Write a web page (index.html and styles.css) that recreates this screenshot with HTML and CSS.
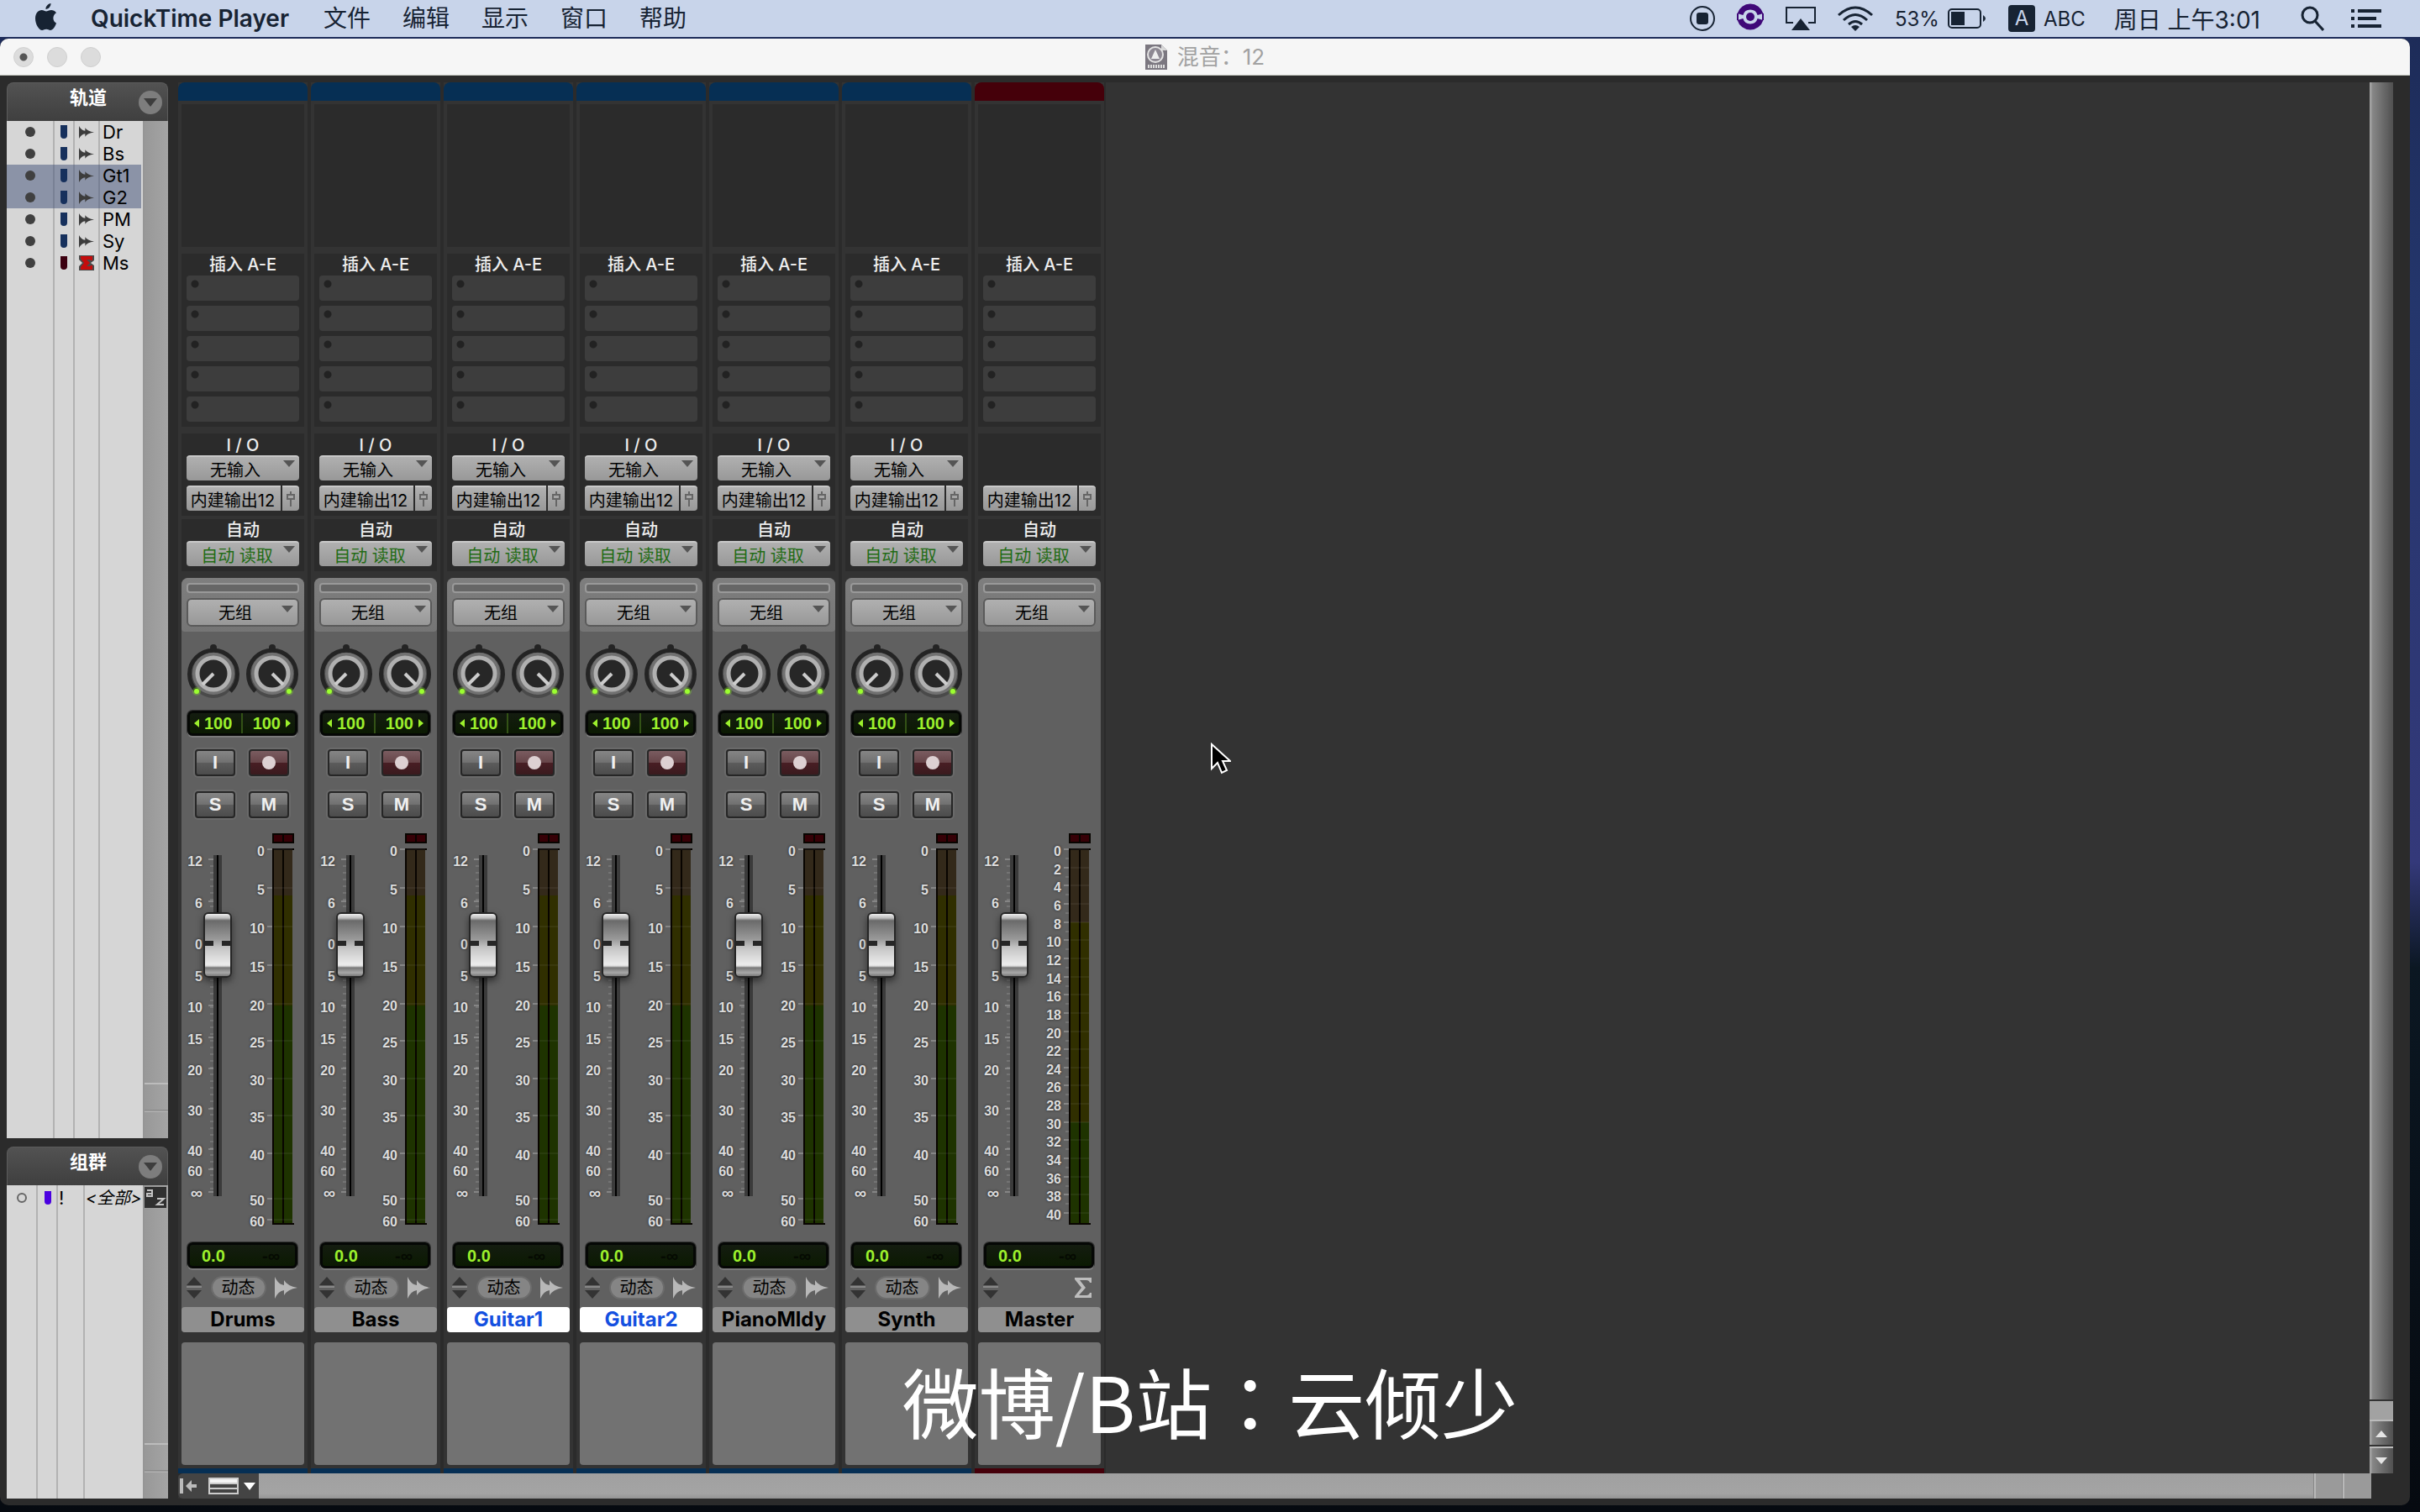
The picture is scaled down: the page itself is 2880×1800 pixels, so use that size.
FILE: index.html
```html
<!DOCTYPE html>
<html lang="zh-CN">
<head>
    <meta charset="UTF-8">
    <meta name="viewport" content="width=device-width, initial-scale=1.0">
    <title>混音：12</title>
    <link rel="stylesheet" href="styles.css">
</head>
<body>
    <header class="menubar">
        <svg class="apple" viewBox="0 0 26 32"><path d="M18.5 0c.3 3.200-2.600 7-6 7-.4-3.200 2.700-6.700 6-7zM25 23.500c-1.500 4.500-4.200 8.500-7 8.500-2 0-2.700-1.200-4.900-1.200-2.300 0-3.100 1.200-5 1.200C4.300 32 0 24.800 0 18c0-6.500 3.800-10 7.600-10 2.200 0 4 1.400 5.400 1.400 1.300 0 3.400-1.500 6.100-1.500 2 0 4.400 1.100 5.900 3.300-5.100 3-4.400 10.200 0 12.300z"/></svg>
        <nav class="menus">
            <a href="#" class="app-name">QuickTime Player</a>
            <a href="#">文件</a>
            <a href="#">编辑</a>
            <a href="#">显示</a>
            <a href="#">窗口</a>
            <a href="#">帮助</a>
        </nav>
        <div class="status">
            <svg width="30" height="30" viewBox="0 0 30 30"><circle cx="15" cy="15" r="14" fill="none" stroke="#172333" stroke-width="2"/><rect x="8" y="8" width="14" height="14" rx="3"/></svg>
            <svg class="raise" width="32" height="32" viewBox="0 0 32 32" fill="none" stroke="#3f0878"><path d="M4 13A12.500 12.500 0 0 1 28 13M4 19a12.500 12.500 0 0 0 24 0" stroke-width="7"/><path d="M1 12v8M31 12v8" stroke-width="2"/><circle cx="16" cy="16" r="5" fill="#3f0878" stroke="none"/></svg>
            <svg width="36" height="30" viewBox="0 0 36 30"><path d="M9 20H1V2h34v18h-8" fill="none" stroke="#172333" stroke-width="2"/><path d="M18 15 7 29h22z"/></svg>
            <svg width="42" height="30" viewBox="0 0 42 30"><path d="M1 11Q21-7 41 11M7 17q14-13 28 0M13 22q8-7 16 0" fill="none" stroke="#172333" stroke-width="3"/><path d="M16 25q5-4 10 0l-5 5z"/></svg>
            <div class="pair">
                <span>53%</span>
                <svg width="46" height="24" viewBox="0 0 46 24"><rect x="1" y="1" width="38" height="22" rx="4" fill="none" stroke="#172333" stroke-width="2"/><rect x="4" y="4" width="16" height="16"/><path d="M42 8q6 4 0 8z"/></svg>
            </div>
            <div class="pair">
                <b class="input-badge">A</b>
                <span>ABC</span>
            </div>
            <span class="clock">周日 上午3:01</span>
            <svg class="search" width="28" height="30" viewBox="0 0 28 30"><g fill="none" stroke="#172333" stroke-width="3"><circle cx="11" cy="11" r="9"/><path d="m17 18 10 11"/></g></svg>
            <svg width="36" height="22" viewBox="0 0 36 22"><path d="M0 0h4v4H0zM8 0h28v4H8zM0 9h4v4H0zM8 9h22v4H8zM0 18h4v4H0zM8 18h28v4H8z"/></svg>
        </div>
    </header>

    <main class="window">
        <div class="titlebar">
            <div class="lights"><i class="dirty"></i><i></i><i></i></div>
            <h1 class="doc-title">
                <svg width="26" height="30" viewBox="0 0 26 30"><path d="M0 0h19l7 7v23H0z" fill="#7b7780"/><path d="M19 0v7h7z" fill="#d8d8d8"/><circle cx="12" cy="12" r="9" fill="#8d8892" stroke="#e3e3e3" stroke-width="2"/><path d="m12 6 5 11H7z" fill="#eee"/><path d="M3 26h20" stroke="#ddd" stroke-width="4" stroke-dasharray="2 1"/></svg>
                混音：12
            </h1>
        </div>

        <div class="workspace">
            <aside class="sidebar">
                <section class="panel tracks">
                    <div class="panel-head">
                        <h2>轨道</h2>
                        <button class="drop" aria-label="轨道菜单"></button>
                    </div>
                    <div class="panel-body">
                        <ul class="list" id="trackList"></ul>
                        <div class="side-scroll"></div>
                    </div>
                </section>
                <section class="panel groups">
                    <div class="panel-head">
                        <h2>组群</h2>
                        <button class="drop" aria-label="组群菜单"></button>
                    </div>
                    <div class="panel-body">
                        <ul class="list">
                            <li class="row">
                                <i class="ring"></i>
                                <i class="color violet"></i>
                                <span>!</span>
                                <em>&lt;全部&gt;</em>
                            </li>
                        </ul>
                        <div class="side-scroll">
                            <svg class="sort" viewBox="0 0 26 25"><path d="M0 0h26v25H0z" fill="#303030"/><path d="M3 4h6v7H3V8h6M15 14h8l-8 7h8" fill="none" stroke="#c4c4c4" stroke-width="2"/></svg>
                        </div>
                    </div>
                </section>
            </aside>

            <div class="mixer">
                <div class="strips" id="strips"></div>
                <div class="vscroll">
                    <div class="vthumb"></div>
                    <button aria-label="向上"><svg viewBox="0 0 14 8"><path d="m7 0 7 8H0z"/></svg></button>
                    <button aria-label="向下"><svg viewBox="0 0 14 8"><path d="m7 8 7-8H0z"/></svg></button>
                </div>
                <div class="bottom">
                    <div class="view-tools">
                        <button aria-label="收起"><svg width="20" height="18" viewBox="0 0 20 18"><path d="M0 0h4v18H0zM7 9l7-7v5h6v4h-6v5z" fill="#bbb"/></svg></button>
                        <button aria-label="视图"><svg width="56" height="20" viewBox="0 0 56 20"><path d="M0 0h36v20H0z" fill="#ccc"/><path d="M2 2h32v4H2z" fill="#f4f4f4"/><path d="M2 8h32v4H2zM2 14h32v4H2z" fill="#444"/><path d="M42 6h14l-7 9z" fill="#fff"/></svg></button>
                    </div>
                    <div class="hscroll"><i></i><i></i></div>
                </div>
            </div>
        </div>
    </main>

    <p class="watermark">微博/B站<span lang="zh-TW">：</span>云倾少</p>
    <svg class="cursor" viewBox="0 0 24 38"><path d="M1 2v29l7-7 5 12 6-3-5-11h9z" fill="#000" stroke="#fff" stroke-width="2"/></svg>

    <script src="script.js"></script>
</body>
</html>
```
FILE: styles.css
```css
* {
    box-sizing: border-box;
}
body {
    margin: 0;
    height: 100vh;
    display: flex;
    flex-direction: column;
    overflow: hidden;
    background: linear-gradient(#1c2a56 0, #24366c 20%, #34397a 57%, #0b1722 64%, #060a10 100%);
    font-family: Inter, "Noto Sans CJK SC", sans-serif;
    font-size: 20px;
    color: #000;
}
button, select, input {
    font: inherit;
    margin: 0;
    padding: 0;
    border: none;
    border-radius: 0;
    appearance: none;
}
h1, h2, h3, ul, p {
    margin: 0;
    padding: 0;
    font-weight: normal;
}
svg {
    display: block;
    flex: none;
}

/* menu bar */
.menubar {
    height: 44px;
    flex: none;
    display: flex;
    align-items: center;
    padding: 0 46px 0 42px;
    background: #c8d4ea;
    color: #172333;
    fill: #172333;
}
.apple {
    width: 26px;
    height: 32px;
    margin-right: 40px;
    margin-bottom: 4px;
}
.menus {
    display: flex;
    gap: 38px;
    font-size: 28px;
}
.menus a {
    color: inherit;
    text-decoration: none;
    line-height: 44px;
}
.menus .app-name {
    font-weight: 600;
    margin-right: 3px;
}
.status {
    margin-left: auto;
    display: flex;
    align-items: center;
    gap: 26px;
    font-size: 24px;
}
.raise {
    margin-bottom: 4px;
}
.pair {
    display: flex;
    align-items: center;
    gap: 10px;
}
.input-badge {
    width: 32px;
    height: 32px;
    line-height: 32px;
    border-radius: 4px;
    background: #172333;
    color: #c8d4ea;
    text-align: center;
    font-weight: 400;
}
.clock {
    margin: 0 22px 0 8px;
    font-size: 28px;
}
.search {
    margin-right: 6px;
}

/* window */
.window {
    flex: 1;
    min-height: 0;
    margin: 2px 12px 8px 0;
    display: flex;
    flex-direction: column;
    border-radius: 10px;
    overflow: hidden;
    background: #2b2b2b;
}
.titlebar {
    height: 44px;
    flex: none;
    display: grid;
    grid-template-columns: 1fr auto 1fr;
    align-items: center;
    padding: 0 16px;
    background: #f6f6f6;
    border-bottom: 1px solid #c4c8c0;
}
.lights {
    display: flex;
    gap: 16px;
}
.lights i {
    width: 24px;
    height: 24px;
    border-radius: 50%;
    background: #dcdcdc;
    border: 1px solid #cfcfcf;
}
.lights .dirty {
    background: radial-gradient(circle, #555 4px, #dcdcdc 5px);
}
.doc-title {
    display: flex;
    align-items: center;
    gap: 12px;
    font-size: 26px;
    line-height: 40px;
    color: #a2a2a2;
}
.workspace {
    flex: 1;
    min-height: 0;
    display: flex;
    gap: 12px;
    padding: 8px 20px 8px 8px;
}

/* track and group lists */
.sidebar {
    width: 192px;
    flex: none;
    display: flex;
    flex-direction: column;
    gap: 10px;
}
.panel {
    display: flex;
    flex-direction: column;
    min-height: 0;
}
.tracks {
    flex: 3;
}
.groups {
    flex: 1;
}
.panel-head {
    height: 46px;
    flex: none;
    display: flex;
    justify-content: flex-end;
    align-items: center;
    gap: 38px;
    padding-right: 6px;
    border: 1px solid #5c5c5c;
    border-bottom: none;
    border-radius: 8px 8px 0 0;
    background: linear-gradient(#525252, #3f3f3f);
}
.panel-head h2 {
    color: #fff;
    font-size: 22px;
    font-weight: 700;
    line-height: 30px;
    padding-bottom: 12px;
}
.drop {
    width: 28px;
    height: 28px;
    border-radius: 50%;
    background: #7d7d7d;
    display: grid;
    place-items: center;
}
.drop::before {
    content: "";
    border: 8px solid transparent;
    border-top: 10px solid #3d3d3d;
    border-bottom: none;
}
.panel-body {
    flex: 1;
    display: flex;
    background: #d6d6d6;
}
.list {
    flex: 1;
    min-width: 0;
    list-style: none;
    background:
        linear-gradient(#b2b2b2, #b2b2b2) 55px 0 / 2px 100% no-repeat,
        linear-gradient(#b2b2b2, #b2b2b2) 79px 0 / 2px 100% no-repeat,
        linear-gradient(#b2b2b2, #b2b2b2) 109px 0 / 2px 100% no-repeat;
}
.groups .list {
    background-position: 35px 0, 59px 0, 91px 0;
}
.row {
    height: 26px;
    display: grid;
    grid-template-columns: 56px 24px 34px 1fr;
    align-items: center;
    font-size: 22px;
    line-height: 26px;
    white-space: nowrap;
}
.row.selected {
    background: rgba(64, 80, 120, 0.5);
    margin-right: 2px;
}
.groups .row {
    grid-template-columns: 36px 26px 32px 1fr;
    margin-top: 2px;
}
.groups em {
    font-size: 20px;
}
.dot {
    width: 12px;
    height: 12px;
    border-radius: 50%;
    background: #404040;
    justify-self: center;
}
.ring {
    width: 12px;
    height: 12px;
    border: 2px solid #666;
    border-radius: 50%;
    justify-self: center;
}
.color {
    width: 8px;
    height: 16px;
    border-radius: 0 0 4px 4px;
    background: #16305c;
    justify-self: center;
}
.color.red {
    background: #3c0010;
}
.color.violet {
    background: #4a00e0;
}
.row svg {
    margin-left: 6px;
}
.side-scroll {
    width: 30px;
    flex: none;
    padding: 2px 0;
    border-left: 2px solid #969696;
    background:
        linear-gradient(#bcbcbc, #bcbcbc) 0 calc(100% - 64px) / 100% 2px no-repeat,
        linear-gradient(#808080, #bcbcbc) 0 calc(100% - 31px) / 100% 3px no-repeat,
        linear-gradient(90deg, #989898, #a4a4a4);
}
.sort {
    width: 26px;
    height: 25px;
}

/* mixer */
.mixer {
    flex: 1;
    min-width: 0;
    display: grid;
    grid-template-columns: 1fr 28px;
    grid-template-rows: 1fr 30px;
    background: #333;
}
.strips {
    display: flex;
    gap: 4px;
}
.strip {
    width: 154px;
    flex: none;
    display: flex;
    flex-direction: column;
    background: #333;
    box-shadow: 0 0 0 2px #2b2b2b;
}
.cap {
    height: 22px;
    border-radius: 8px 8px 0 0;
    background: #062f54;
}
.foot-cap {
    height: 6px;
    background: #062f54;
}
.master .cap,
.master .foot-cap {
    background: #45000a;
}
.strip-body {
    flex: 1;
    display: flex;
    flex-direction: column;
    padding: 4px;
}
.blank {
    height: 170px;
    margin-bottom: 8px;
    background: #2b2b2b;
}
.block {
    display: flex;
    flex-direction: column;
    gap: 6px;
    padding: 0 6px 6px;
    margin-bottom: 8px;
    background: #2b2b2b;
}
.block h3 {
    font-size: 20px;
    font-weight: 500;
    line-height: 26px;
    margin-bottom: -6px;
    text-align: center;
    color: #eee;
}
.slot {
    height: 30px;
    border-radius: 4px;
    background: radial-gradient(circle at 10px 10px, #222 4px, #3d3d3d 5px);
}
.io {
    height: 98px;
    margin-bottom: 4px;
    justify-content: flex-end;
}
.io h3 {
    padding-top: 2px;
    line-height: 24px;
    white-space: pre;
}
.picker {
    display: grid;
}
.picker select,
.output button {
    height: 30px;
    border-radius: 4px;
    border-top: 2px solid #c8c8c8;
    background: linear-gradient(#b0b0b0, #989898);
    color: #000;
    font-size: 20px;
    line-height: 28px;
}
.picker select {
    grid-area: 1 / 1;
    width: 100%;
    padding-top: 2px;
    padding-right: 18px;
    text-align-last: center;
}
.picker::after {
    content: "";
    grid-area: 1 / 1;
    justify-self: end;
    align-self: start;
    margin: 6px 5px;
    border: 7px solid transparent;
    border-top: 8px solid #555;
    border-bottom: none;
    pointer-events: none;
}
.auto select {
    color: #226b14;
    padding-right: 14px;
}
.output {
    display: grid;
    grid-template-columns: 1fr 20px;
    gap: 2px;
}
.output .path {
    padding-top: 2px;
    padding-right: 2px;
    border-radius: 4px 0 0 4px;
    white-space: nowrap;
}
.output .mini-fader {
    border-radius: 0 4px 4px 0;
    display: grid;
    place-items: center;
}

/* fader section */
.channel {
    display: flex;
    flex-direction: column;
    border-radius: 8px 8px 4px 4px;
    background: #606060;
}
.group {
    height: 64px;
    padding: 6px;
    border-radius: 8px 8px 4px 4px;
    background: linear-gradient(#7e7e7e, #757575);
}
.group-bar {
    height: 12px;
    margin-bottom: 6px;
    border: 2px solid #999;
    border-radius: 4px;
    background: #666;
}
.group select {
    height: 34px;
    border: 2px solid #5a5a5a;
    border-radius: 6px;
    font-size: 20px;
}
.group .picker::after {
    margin: 9px 7px;
}
.controls {
    height: 234px;
}
.knobs {
    height: 94px;
    padding: 15px 3px 0;
    display: flex;
}
.lcd {
    height: 30px;
    margin: 0 8px 0 7px;
    display: flex;
    align-items: center;
    justify-content: space-between;
    border: 3px solid #050705;
    border-radius: 6px;
    background: linear-gradient(#141c10, #0b1a02);
    box-shadow: 0 2px 0 #7a7a7a, 0 0 0 1px #333;
    color: #9cf02c;
    font: bold 20px/24px "Liberation Sans", sans-serif;
}
.pan {
    padding: 0 5px;
    fill: #9cf02c;
}
.pan span {
    display: flex;
    align-items: center;
    gap: 6px;
}
.pan span:first-child {
    padding-right: 11px;
    border-right: 2px solid #335216;
}
.volume {
    height: 31px;
    padding: 0 18px 0 14px;
}
.volume span {
    color: #050a02;
}
.buttons {
    display: grid;
    grid-template-columns: 48px 48px;
    justify-content: center;
    gap: 18px 16px;
    margin-top: 16px;
    padding-right: 2px;
}
.key {
    height: 32px;
    border: 2px solid #262626;
    border-radius: 4px;
    background: linear-gradient(#858585, #707070 50%, #5c5c5c 50%, #4c4c4c);
    box-shadow: 0 0 0 2px #6a6a6a;
    color: #f0f0f0;
    font: bold 22px/28px "Liberation Sans", sans-serif;
    display: grid;
    place-items: center;
}
.key.rec {
    background: linear-gradient(#7a5c60, #664448 50%, #481e24 50%, #3a1a1e);
}
.key.rec::before {
    content: "";
    width: 16px;
    height: 16px;
    border-radius: 50%;
    background: #ddd0d2;
}
.fader-area {
    height: 480px;
    display: grid;
    justify-items: start;
    align-items: start;
    margin-bottom: 13px;
}
.scale {
    grid-area: 1 / 1;
    width: 146px;
    height: 480px;
    font: bold 16px "Liberation Sans Narrow", "Liberation Sans", sans-serif;
    fill: #dcdcdc;
    text-anchor: end;
}
.scale text {
    text-shadow: 0 0 3px #222;
}
.scale .inf {
    font-size: 20px;
}
.fader {
    grid-area: 1 / 1;
    width: 34px;
    height: 406px;
    margin: 32px 0 0 26px;
    writing-mode: vertical-lr;
    direction: rtl;
    background: linear-gradient(90deg, #3b3b3b 4px, #000 4px, #000 6px, #3b3b3b 6px) center / 10px 100% no-repeat;
}
.fader::-webkit-slider-runnable-track {
    width: 34px;
    height: 100%;
}
.fader::-webkit-slider-thumb {
    appearance: none;
    width: 34px;
    height: 78px;
    border: 2px solid #262626;
    border-radius: 6px;
    box-shadow: 0 4px 8px rgba(0, 0, 0, 0.5);
    background:
        linear-gradient(#262626, #262626) left 32px / 10px 6px no-repeat,
        linear-gradient(#262626, #262626) right 32px / 10px 6px no-repeat,
        linear-gradient(#eee 0, #bbb 5px, #6a6a6a 8px, #999 30px, #c4c4c4 40px, #ececec 60px, #ddd 62px, #777 64px, #a8a8a8 70px, #777 74px);
}
.foot {
    height: 26px;
    margin: 10px 8px 10px 6px;
    display: flex;
    align-items: center;
    justify-content: space-between;
}
.foot button {
    background: none;
}
.foot .dyn {
    width: 66px;
    height: 28px;
    border: 2px solid #6c6c6c;
    border-radius: 14px;
    background: #858585;
    line-height: 24px;
}
.foot .sum {
    margin-right: 3px;
}
.name {
    height: 30px;
    width: 100%;
    border-radius: 4px;
    background: #8f8f8f;
    text-align: center;
    font-size: 24px;
    font-weight: 700;
    line-height: 30px;
}
.name.selected {
    background: #fff;
    color: #1450e0;
}
.comments {
    flex: 1;
    margin-top: 12px;
    border-radius: 4px;
    background: #727272;
}

/* scrollbars */
.vscroll {
    display: flex;
    flex-direction: column;
    justify-content: flex-end;
    background: linear-gradient(90deg, #a0a0a0 2px, #888 3px, #505050);
}
.vthumb {
    height: 24px;
    border-top: 2px solid #333;
    background: #a2a2a2;
}
.vscroll button {
    height: 32px;
    border-top: 2px solid #bbb;
    background: none;
    display: grid;
    place-items: center;
}
.vscroll button + button {
    box-shadow: 0 -2px 0 #333;
}
.vscroll svg {
    width: 14px;
    fill: #e4e4e4;
}
.bottom {
    grid-column: 1 / 3;
    margin-right: 26px;
    display: flex;
    box-shadow: 26px 0 0 #2b2b2b;
}
.view-tools {
    width: 96px;
    display: flex;
    align-items: center;
    gap: 14px;
    padding-left: 2px;
    background: #444;
    border-radius: 6px 0 0 6px;
}
.view-tools button {
    background: none;
}
.hscroll {
    flex: 1;
    display: flex;
    justify-content: flex-end;
    background: linear-gradient(#a0a0a0, #a4a4a4 80%, #959595);
}
.hscroll i {
    width: 34px;
    border-left: 2px solid #b8b8b8;
    box-shadow: -1px 0 0 #888;
    background: #9a9a9a;
}

/* overlays */
.watermark {
    position: absolute;
    left: 50%;
    bottom: 66px;
    transform: translateX(-50%);
    color: #fff;
    font: 91px/136px "Noto Sans CJK SC", sans-serif;
    white-space: nowrap;
}
.watermark span {
    font-family: "Noto Sans CJK TC", sans-serif;
}
.cursor {
    position: absolute;
    left: 1441px;
    top: 884px;
    width: 24px;
    height: 38px;
}
```
FILE: script.js
```javascript
const voiceIcon = (w, h, color) => `<svg width="${w}" height="${h}" viewBox="0 0 27 26" preserveAspectRatio="none"><path d="M0 0Q4 9 11 10V4q4 7 16 9-12 2-16 9v-6Q4 17 0 26z" fill="${color}"/></svg>`;

const tracks = [
    { short: 'Dr', name: 'Drums' },
    { short: 'Bs', name: 'Bass' },
    { short: 'Gt1', name: 'Guitar1', selected: true },
    { short: 'G2', name: 'Guitar2', selected: true },
    { short: 'PM', name: 'PianoMldy' },
    { short: 'Sy', name: 'Synth' },
    { short: 'Ms', name: 'Master', master: true }
];

// [label, y of the tick]
const faderMarks = [['12', 37], ['6', 87], ['0', 136], ['5', 174], ['10', 211], ['15', 249], ['20', 286], ['30', 334], ['40', 382], ['60', 406], ['∞', 433]];
const meterMarks = [['0', 25], ['5', 71], ['10', 117], ['15', 163], ['20', 209], ['25', 253], ['30', 298], ['35', 342], ['40', 387], ['50', 441], ['60', 466]];
const masterMarks = [];
for (let i = 0; i <= 20; i++) {
    masterMarks.push([String(i * 2), 25 + Math.round(i * 21.65)]);
}

function scale(track) {
    const marks = track.master ? masterMarks : meterMarks;
    const amber = track.master ? 112 : 80;
    const green = track.master ? 350 : 211;
    let out = '';
    for (let y = 45; y < 430; y += 8) {
        out += `<path d="M34 ${y}h4" stroke="#888"/>`;
    }
    faderMarks.forEach(([t, y]) => {
        out += `<text x="25" y="${y + 8}"${t === '∞' ? ' class="inf"' : ''}>${t}</text><path d="M32 ${y}h6" stroke="#aaa"/>`;
    });
    out += `<path d="M108 6h26v12h-26zM108 24h26v448h-26z" fill="#080400"/>
        <path d="M110 8h10v8h-10zM122 8h10v8h-10z" fill="#360006"/>
        <path d="M110 26h10v${amber - 26}h-10zM122 26h10v${amber - 26}h-10z" fill="#33291a"/>
        <path d="M110 ${amber}h10v${green - amber}h-10zM122 ${amber}h10v${green - amber}h-10z" fill="#302f00"/>
        <path d="M110 ${green}h10v${470 - green}h-10zM122 ${green}h10v${470 - green}h-10z" fill="#1e3300"/>
        <path d="M132 26h2v444h-2z" fill="#606060"/>`;
    marks.forEach(([t, y], i) => {
        out += `<text x="99" y="${y + 8}">${t}</text><path d="M102 ${y}h6" stroke="#aaa"/><path d="M110 ${y}h22" stroke="#fff" stroke-opacity=".1"/>`;
        if (track.master && i < marks.length - 1) {
            out += `<path d="M104 ${y + 11}h4" stroke="#888"/>`;
        }
    });
    return `<svg class="scale" viewBox="0 0 146 480">${out}</svg>`;
}

function knob(side) {
    const d = side === 'left' ? -1 : 1;
    return `<svg width="70" height="70" viewBox="0 0 70 70">
        <circle cx="35" cy="38" r="26" fill="#4a4a4a"/>
        <path d="M15 56A28.500 28.500 0 1 1 55 56" fill="none" stroke="#242424" stroke-width="5"/>
        <circle cx="35" cy="4" r="4" fill="#242424"/>
        <circle cx="35" cy="35" r="25" fill="#717171"/>
        <circle cx="35" cy="35" r="19" fill="#272727" stroke="#b0b0b0" stroke-width="5"/>
        <path d="M35 35l${d * 13} 13" stroke="#ccc" stroke-width="4"/>
        <circle cx="${35 + d * 20}" cy="56" r="5" fill="#8cf028" opacity=".3"/>
        <circle cx="${35 + d * 20}" cy="56" r="3" fill="#9cff30"/>
    </svg>`;
}

function picker(label, value) {
    return `<div class="picker"><select aria-label="${label}"><option>${value}</option></select></div>`;
}

function strip(track) {
    const controls = track.master ? '' : `
        <div class="knobs">${knob('left')}${knob('right')}</div>
        <div class="lcd pan">
            <span><svg width="6" height="10"><path d="M6 0v10L0 5z"/></svg>100</span>
            <span>100<svg width="6" height="10"><path d="M0 0v10l6-5z"/></svg></span>
        </div>
        <div class="buttons">
            <button class="key">I</button>
            <button class="key rec" aria-label="录音"></button>
            <button class="key">S</button>
            <button class="key">M</button>
        </div>`;
    const right = track.master
        ? '<svg class="sum" width="20" height="24" viewBox="0 0 20 24"><path d="M0 0h20v6h-2q-1-3-4-3H6l7 9-8 9h9q3 0 4-3h2v6H0v-2l8-10L0 2z" fill="#bdbdbd"/></svg>'
        : `<button class="dyn">动态</button>${voiceIcon(27, 26, '#b8b8b8')}`;

    return `<section class="strip${track.master ? ' master' : ''}">
        <div class="cap"></div>
        <div class="strip-body">
            <div class="blank"></div>
            <div class="block inserts"><h3>插入 A-E</h3>${'<div class="slot"></div>'.repeat(5)}</div>
            <div class="block io">
                ${track.master ? '' : '<h3>I / O</h3>' + picker('输入', '无输入')}
                <div class="output">
                    <button class="path">内建输出12</button>
                    <button class="mini-fader" aria-label="输出窗口"><svg width="10" height="18"><path d="M5 0v4M5 9v9" stroke="#666" stroke-width="2"/><path d="M1 4h8v5H1z" fill="none" stroke="#666" stroke-width="2"/></svg></button>
                </div>
            </div>
            <div class="block auto"><h3>自动</h3>${picker('自动', '自动 读取')}</div>
            <div class="channel">
                <div class="group"><div class="group-bar"></div>${picker('组', '无组')}</div>
                <div class="controls">${controls}</div>
                <div class="fader-area">
                    ${scale(track)}
                    <input class="fader" type="range" min="0" max="1000" value="793" aria-label="${track.name} 音量">
                </div>
                <div class="lcd volume">0.0<span>-∞</span></div>
                <div class="foot">
                    <svg width="18" height="26" viewBox="0 0 18 26"><path d="m9 0 9 10H0zM9 26l9-10H0z" fill="#333"/><path d="M0 12h18" stroke="#888" stroke-width="2"/></svg>
                    ${right}
                </div>
                <button class="name${track.selected ? ' selected' : ''}">${track.name}</button>
            </div>
            <div class="comments"></div>
        </div>
        <div class="foot-cap"></div>
    </section>`;
}

function row(track) {
    const icon = track.master
        ? '<svg width="18" height="18" viewBox="0 0 18 18"><path d="M0 0h18v18H0z" fill="#4a4a4a"/><path d="M2 1h14v5h-2l-1-1H9l4 4-4 4h4l1-1h2v5H2v-3l4-5-4-5z" fill="#c40d0d"/><path d="M0 5l4 4-4 4zM18 6l-4 3 4 3z" fill="#d6d6d6"/></svg>'
        : voiceIcon(18, 15, '#3c3c3c');
    return `<li class="row${track.selected ? ' selected' : ''}">
        <i class="dot"></i><i class="color${track.master ? ' red' : ''}"></i>${icon}<span>${track.short}</span>
    </li>`;
}

document.getElementById('trackList').innerHTML = tracks.map(row).join('');
document.getElementById('strips').innerHTML = tracks.map(strip).join('');
```
